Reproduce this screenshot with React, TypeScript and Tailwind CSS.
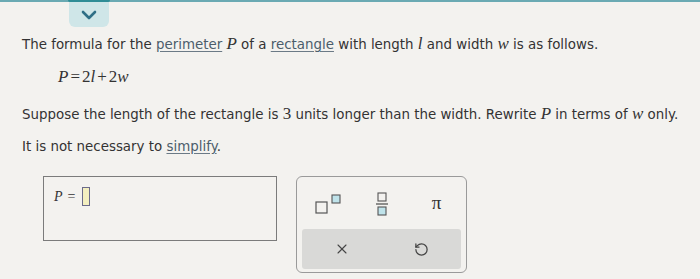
import React from 'react';
import { RotateCcw, X } from 'lucide-react';

const serif = { fontFamily: '"Liberation Serif", serif' };

const MathI = ({ children }: { children: React.ReactNode }) => (
  <span className="italic text-[17px]" style={serif}>
    {children}
  </span>
);

const Term = ({ children }: { children: React.ReactNode }) => (
  <span className="text-[#4b5d6b] underline decoration-[#6b7a86] underline-offset-2">{children}</span>
);

const App = () => {
  return (
    <div
      className="relative w-[700px] h-[279px] bg-[#f3f2ef] text-[#333] overflow-hidden text-[13.4px]"
      style={{ fontFamily: '"DejaVu Sans", Verdana, sans-serif' }}
    >
      <div className="h-[2px] w-full bg-[#6aaab3]" />
      <div className="ml-[68px] w-[42px]">
        <div className="h-[2px] -mt-[2px] bg-[#2f8d96] rounded-b-sm" />
        <div className="h-[25px] w-[40px] ml-[1px] bg-[#cfe6e8] rounded-b-md flex items-center justify-center">
          <svg width="18" height="12" viewBox="0 0 18 12">
            <path d="M3 3 L9 9 L15 3" fill="none" stroke="#2f6f86" strokeWidth="2.6" strokeLinecap="round" strokeLinejoin="round" />
          </svg>
        </div>
      </div>

      <div className="pl-[22px]">
        <p className="mt-[8px] leading-[18px]">
          The formula for the <Term>perimeter</Term> <MathI>P</MathI> of a <Term>rectangle</Term> with length{' '}
          <MathI>l</MathI> and width <MathI>w</MathI> is as follows.
        </p>
        <p className="mt-[13px] ml-[36px] leading-[20px] text-[17px]" style={serif}>
          <span className="italic">P</span>
          <span className="mx-[2px]">=</span>2<span className="italic">l</span>
          <span className="mx-[2px]">+</span>2<span className="italic">w</span>
        </p>
        <p className="mt-[18px] leading-[18px]">
          Suppose the length of the rectangle is <span className="text-[17px]" style={serif}>3</span> units longer than the width. Rewrite <MathI>P</MathI> in terms of{' '}
          <MathI>w</MathI> only.
        </p>
        <p className="mt-[14px] leading-[18px]">
          It is not necessary to <Term>simplify</Term>.
        </p>
      </div>

      <div className="flex mt-[20px] pl-[43px] gap-[19px]">
        <div className="w-[234px] h-[65px] border border-[#7b7b7b] pl-[10px] pt-[9px]">
          <div className="flex items-center gap-[5px] text-[14px]" style={serif}>
            <span className="italic">P</span>
            <span>=</span>
            <span className="w-[8px] h-[19px] border border-[#6b6b8a] bg-[#f3efc0] ml-[2px]" />
          </div>
        </div>
        <div className="w-[171px] h-[97px] border border-[#9a9a9a] rounded-[6px] px-[5px] pt-[5px]">
          <div className="h-[47px] grid grid-cols-3 items-center justify-items-center pb-[4px]">
            <svg width="28" height="22" viewBox="0 0 28 22">
              <rect x="1" y="9" width="11" height="11" fill="none" stroke="#555" strokeWidth="1.2" />
              <rect x="17" y="2" width="8" height="8" fill="#bfe3ea" stroke="#555" strokeWidth="1.1" />
            </svg>
            <svg width="12" height="24" viewBox="0 0 12 24">
              <rect x="2" y="1" width="8" height="8" fill="none" stroke="#555" strokeWidth="1.1" />
              <line x1="0" y1="12" x2="12" y2="12" stroke="#555" strokeWidth="1.3" />
              <rect x="2" y="15" width="8" height="8" fill="#bfe3ea" stroke="#555" strokeWidth="1.1" />
            </svg>
            <span className="text-[19px] text-[#333] pl-[4px]" style={serif}>π</span>
          </div>
          <div className="h-[40px] bg-[#d9d9d7] rounded-[3px] flex items-center justify-around">
            <X size={16} strokeWidth={1.6} color="#444" />
            <RotateCcw size={15} strokeWidth={2} color="#444" />
          </div>
        </div>
      </div>
    </div>
  );
};

export default App;
